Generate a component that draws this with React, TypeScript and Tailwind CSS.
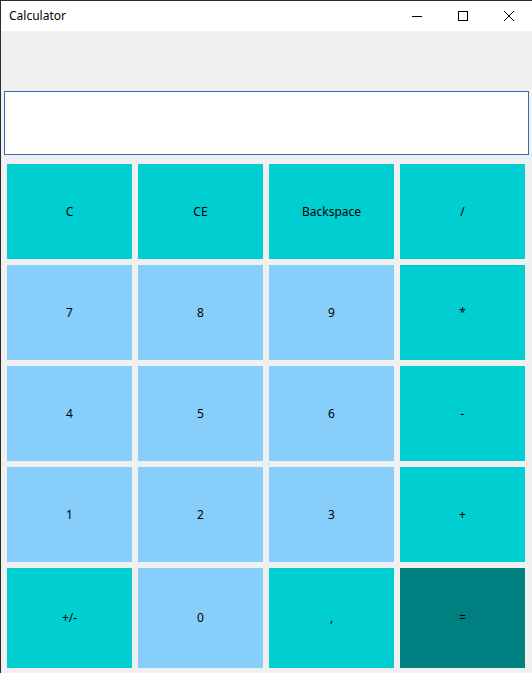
import React, { useState } from 'react';

type Key = { label: string; tone: 'cyan' | 'sky' | 'teal' };

const keys: Key[] = [
  { label: 'C', tone: 'cyan' },
  { label: 'CE', tone: 'cyan' },
  { label: 'Backspace', tone: 'cyan' },
  { label: '/', tone: 'cyan' },
  { label: '7', tone: 'sky' },
  { label: '8', tone: 'sky' },
  { label: '9', tone: 'sky' },
  { label: '*', tone: 'cyan' },
  { label: '4', tone: 'sky' },
  { label: '5', tone: 'sky' },
  { label: '6', tone: 'sky' },
  { label: '-', tone: 'cyan' },
  { label: '1', tone: 'sky' },
  { label: '2', tone: 'sky' },
  { label: '3', tone: 'sky' },
  { label: '+', tone: 'cyan' },
  { label: '+/-', tone: 'cyan' },
  { label: '0', tone: 'sky' },
  { label: ',', tone: 'cyan' },
  { label: '=', tone: 'teal' },
];

const toneClass = {
  cyan: 'bg-[#00ced1]',
  sky: 'bg-[#87cefa]',
  teal: 'bg-[#008080]',
};

function TitleBar() {
  return (
    <div className="flex h-[30px] items-center bg-white">
      <span className="pl-[8px] text-[12px] text-black">Calculator</span>
      <div className="ml-auto flex h-full">
        {/* minimize */}
        <div className="flex h-full w-[46px] items-center justify-center">
          <svg width="10" height="10" viewBox="0 0 10 10">
            <path d="M0 5.5h10" stroke="#000" strokeWidth="1" />
          </svg>
        </div>
        {/* maximize */}
        <div className="flex h-full w-[46px] items-center justify-center">
          <svg width="10" height="10" viewBox="0 0 10 10">
            <rect x="0.5" y="0.5" width="9" height="9" fill="none" stroke="#000" strokeWidth="1" />
          </svg>
        </div>
        {/* close */}
        <div className="flex h-full w-[46px] items-center justify-center">
          <svg width="10" height="10" viewBox="0 0 10 10">
            <path d="M0 0L10 10M10 0L0 10" stroke="#000" strokeWidth="1" />
          </svg>
        </div>
      </div>
    </div>
  );
}

export default function App() {
  const [display, setDisplay] = useState('');

  return (
    <div
      className="h-[673px] w-[532px] overflow-hidden border-l border-t border-[#2b2b2b] bg-[#f0f0f0]"
      style={{ fontFamily: '"Noto Sans", "Open Sans", Arial, sans-serif' }}
    >
      <TitleBar />

      <div className="pl-[3px] pr-[3px] pt-[60px]">
        <input
          value={display}
          onChange={(e) => setDisplay(e.target.value)}
          className="block h-[64px] w-[525px] border border-[#2a6fb3] bg-white px-2 text-[20px] text-black outline-none"
        />
      </div>

      <div className="grid grid-cols-[repeat(4,125px)] grid-rows-[95px_95px_95px_95px_100px] gap-[6px] pl-[6px] pt-[9px]">
        {keys.map((k) => (
          <button
            key={k.label}
            onClick={() => setDisplay((d) => d + k.label)}
            className={`flex items-center justify-center text-[12px] text-black ${toneClass[k.tone]}`}
          >
            {k.label}
          </button>
        ))}
      </div>
    </div>
  );
}
